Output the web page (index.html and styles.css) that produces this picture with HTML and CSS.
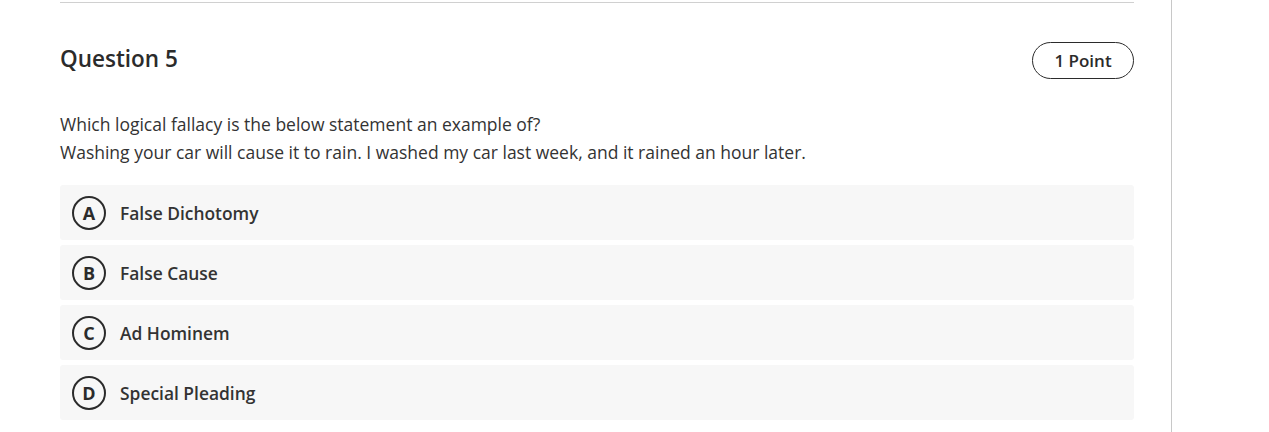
FILE: index.html
```html
<!DOCTYPE html>
<html>
<head>
<meta charset="utf-8">
<link rel="stylesheet" href="styles.css">
</head>
<body>
<div class="page">
  <main class="main">
    <div class="question">
      <div class="q-head">
        <h2 class="q-title">Question 5</h2>
        <span class="points">1 Point</span>
      </div>
      <div class="q-text">
        <p>Which logical fallacy is the below statement an example of?</p>
        <p>Washing your car will cause it to rain. I washed my car last week, and it rained an hour later.</p>
      </div>
      <ul class="options">
        <li class="option"><span class="letter">A</span><span class="label">False Dichotomy</span></li>
        <li class="option"><span class="letter">B</span><span class="label">False Cause</span></li>
        <li class="option"><span class="letter">C</span><span class="label">Ad Hominem</span></li>
        <li class="option"><span class="letter">D</span><span class="label">Special Pleading</span></li>
      </ul>
    </div>
  </main>
  <aside class="sidebar"></aside>
</div>
</body>
</html>
```
FILE: styles.css
```css
html, body {
  margin: 0;
  padding: 0;
  background: #fff;
}
body {
  font-family: "Open Sans", "Noto Sans", sans-serif;
  color: #333;
}
.page {
  display: flex;
  height: 432px;
  overflow: hidden;
}
.main {
  width: 1171px;
  padding-left: 60px;
  padding-right: 37px;
  box-sizing: border-box;
}
.question {
  border-top: 1px solid #d0d0d0;
  margin-top: 2px;
}
.sidebar {
  flex: 1;
  border-left: 1px solid #c8c8c8;
}
.q-head {
  display: flex;
  justify-content: space-between;
  align-items: center;
  margin-top: 39px;
  height: 37px;
}
.q-title {
  margin: 0 0 3px;
  font-size: 22.5px;
  font-weight: 600;
  color: #2b2b2b;
  line-height: 30px;
}
.points {
  display: inline-flex;
  align-items: center;
  justify-content: center;
  width: 102px;
  height: 37px;
  box-sizing: border-box;
  border: 1px solid #2b2b2b;
  border-radius: 19px;
  font-size: 17px;
  font-weight: 600;
  color: #2b2b2b;
}
.q-text {
  margin-top: 31px;
  font-size: 17.5px;
  line-height: 28px;
  color: #333;
}
.q-text p {
  margin: 0;
}
.options {
  list-style: none;
  margin: 19px 0 0;
  padding: 0;
  display: flex;
  flex-direction: column;
  gap: 5px;
}
.option {
  display: flex;
  align-items: center;
  height: 55px;
  background: #f7f7f7;
  border-radius: 3px;
  padding-left: 12px;
}
.letter {
  width: 34px;
  height: 34px;
  box-sizing: border-box;
  border: 2px solid #2b2b2b;
  border-radius: 50%;
  display: inline-flex;
  align-items: center;
  justify-content: center;
  font-size: 18px;
  font-weight: 700;
  color: #2b2b2b;
}
.label {
  margin-left: 14px;
  font-size: 17.4px;
  font-weight: 600;
  color: #333;
}
```
